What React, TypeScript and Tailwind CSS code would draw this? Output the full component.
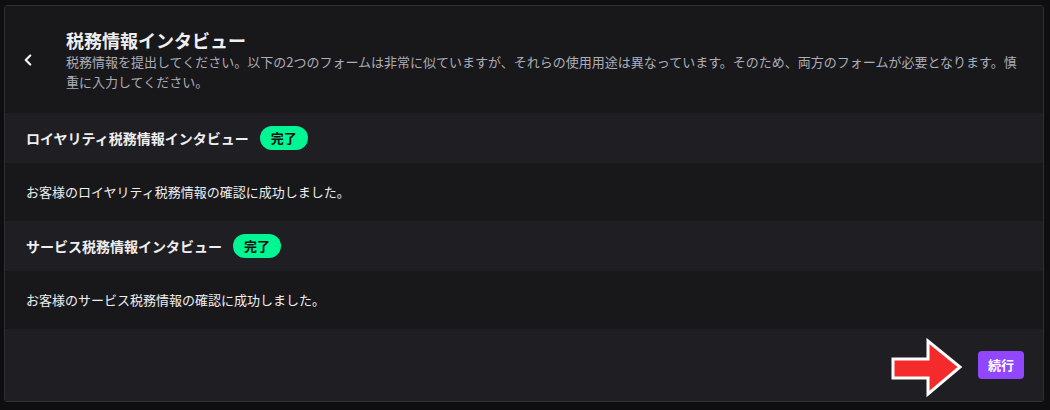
import { ChevronLeft } from "lucide-react";

const font = { fontFamily: '"Noto Sans CJK JP", "Noto Sans", sans-serif' };

function Section({ title, message }: { title: string; message: string }) {
  return (
    <div>
      <div className="h-[50px] bg-[#1f1f23] flex items-center pl-[21px] gap-[11px]">
        <span className="text-[14px] font-bold text-[#efeff1]">{title}</span>
        <span className="h-[24px] px-[11px] rounded-full bg-[#00f593] text-[#0e0e10] text-[13px] font-bold flex items-center">
          完了
        </span>
      </div>
      <div className="h-[58px] bg-[#18181b] flex items-center pl-[21px]">
        <p className="text-[13px] text-[#efeff1]">{message}</p>
      </div>
    </div>
  );
}

function Arrow() {
  return (
    <svg width="74" height="60" viewBox="0 0 74 60" className="block mt-[5px]">
      <polygon
        points="3,21 38,21 38,3 70,29 38,56 38,40 3,40"
        fill="#f52b2b"
        stroke="#ffffff"
        strokeWidth="3"
        strokeLinejoin="miter"
      />
    </svg>
  );
}

export default function App() {
  return (
    <div className="w-[1050px] h-[410px] bg-[#0e0e10] pt-[5px] pl-[4px]" style={font}>
      <div className="w-[1040px] h-[397px] border border-[#2f2f35] rounded-[3px] overflow-hidden flex flex-col">
        <div className="h-[107px] bg-[#18181b] flex items-center">
          <div className="w-[61px] pl-[14px]">
            <ChevronLeft className="w-[18px] h-[18px] text-[#efeff1]" strokeWidth={3} />
          </div>
          <div className="flex-1 pr-[18px]">
            <h1 className="text-[18px] font-bold text-[#efeff1] leading-[24px]">税務情報インタビュー</h1>
            <p className="text-[13px] text-[#adadb8] leading-[20px]">
              税務情報を提出してください。以下の2つのフォームは非常に似ていますが、それらの使用用途は異なっています。そのため、両方のフォームが必要となります。慎重に入力してください。
            </p>
          </div>
        </div>
        <Section title="ロイヤリティ税務情報インタビュー" message="お客様のロイヤリティ税務情報の確認に成功しました。" />
        <Section title="サービス税務情報インタビュー" message="お客様のサービス税務情報の確認に成功しました。" />
        <div className="flex-1 bg-[#1f1f23] flex items-center justify-end pr-[19px] gap-[14px]">
          <Arrow />
          <button className="h-[28px] px-[10px] rounded-[4px] bg-[#9147ff] text-white text-[13px] font-bold">
            続行
          </button>
        </div>
      </div>
    </div>
  );
}
